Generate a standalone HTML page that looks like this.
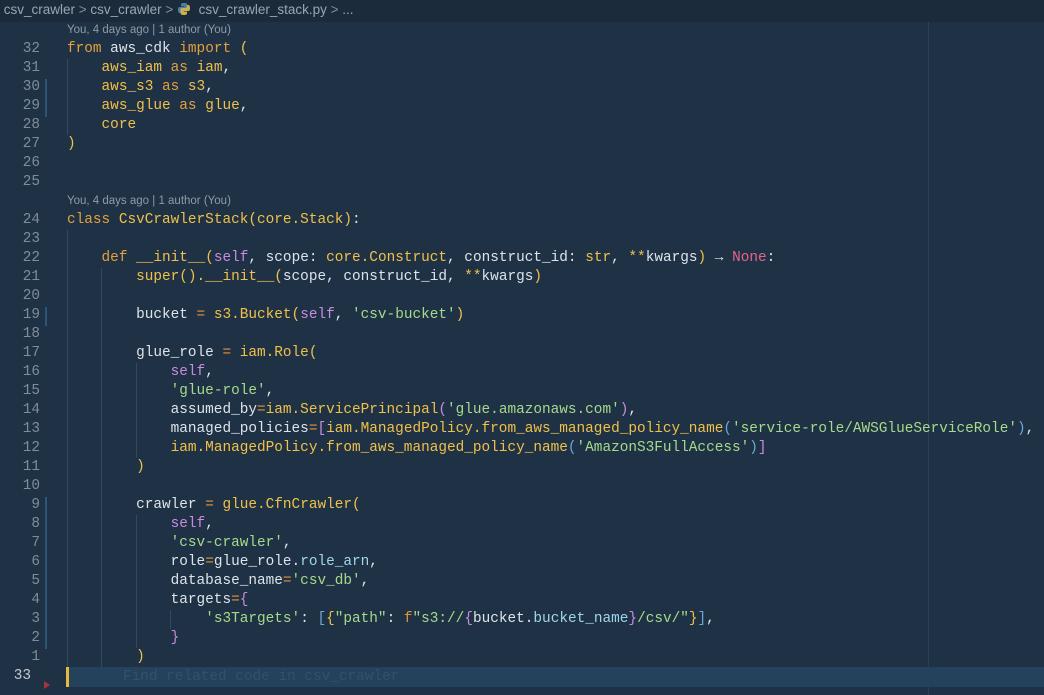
<!DOCTYPE html>
<html><head><meta charset="utf-8"><style>
body{margin:0;width:1044px;height:695px;overflow:hidden;background:#1f3245;position:relative;font-family:"Liberation Mono",monospace;}
#bc{position:absolute;left:0;top:0;width:1044px;height:22px;background:#1b2b3b;color:#9aa6b2;font:13.5px "Liberation Sans",sans-serif;line-height:20px;white-space:pre;}
.row{position:absolute;left:0;width:1044px;height:19px;line-height:19px;font-size:14.4px;white-space:pre;}
.ln{position:absolute;left:0;width:40px;text-align:right;color:#7f8c99;}
.code{position:absolute;left:67px;color:#dde3ea;}
.lens{position:absolute;left:67px;font:11.5px "Liberation Sans",sans-serif;color:#8e9aa7;height:18px;line-height:18px;white-space:pre;}
.k{color:#e3a03c}.y{color:#efc04a}.s{color:#a6d98c}.p{color:#c98ae0}.n{color:#e2648a}.b{color:#6aa7d8}.c{color:#9fd6e8}.o{color:#e49238}
.g{position:absolute;width:1px;background:#34495d}
.bar{position:absolute;left:45px;width:2px;background:#2c5676}
</style></head><body>
<div id="bc"> csv_crawler <span style="color:#8090a0">&gt;</span> csv_crawler <span style="color:#8090a0">&gt;</span> <svg width="14" height="14" viewBox="0 0 14 14" style="vertical-align:-2px"><path d="M7 1C4 1 4 2 4 3v1.5h3.2V5H2.5C1 5 1 7 1 8s.3 3 1.5 3H4V9.5C4 8.5 5 8 6 8h3c1 0 1.5-.5 1.5-1.5V3C10.5 2 10 1 7 1z" fill="#4a7fa8"/><path d="M7 13c3 0 3-1 3-2V9.5H6.8V9h4.7c1.5 0 1.5-2 1.5-3s-.3-3-1.5-3H10v1.5C10 5.5 9 6 8 6H5C4 6 3.5 6.5 3.5 7.5V11C3.5 12 4 13 7 13z" fill="#c9b14e"/></svg>  csv_crawler_stack.py <span style="color:#8090a0">&gt;</span> ...</div>

<div class="g" style="left:67px;top:59px;height:76px"></div>
<div class="g" style="left:67px;top:230px;height:437px"></div>
<div class="g" style="left:101px;top:268px;height:399px"></div>
<div class="g" style="left:136px;top:363px;height:95px"></div>
<div class="g" style="left:136px;top:515px;height:133px"></div>
<div class="g" style="left:170px;top:610px;height:19px"></div>
<div class="g" style="left:928px;top:22px;height:673px;background:#2a4257"></div>

<div class="bar" style="top:79px;height:38px"></div>
<div class="bar" style="top:307px;height:19px"></div>
<div class="bar" style="top:497px;height:152px"></div>

<div class="lens" style="top:21px">You, 4 days ago | 1 author (You)</div>
<div class="row" style="top:40px"><span class="ln">32</span><span class="code"><span class="k">from</span> aws_cdk <span class="k">import</span> <span class="y">(</span></span></div>
<div class="row" style="top:59px"><span class="ln">31</span><span class="code"><span class="y">    aws_iam</span> <span class="k">as</span> <span class="y">iam</span>,</span></div>
<div class="row" style="top:78px"><span class="ln">30</span><span class="code"><span class="y">    aws_s3</span> <span class="k">as</span> <span class="y">s3</span>,</span></div>
<div class="row" style="top:97px"><span class="ln">29</span><span class="code"><span class="y">    aws_glue</span> <span class="k">as</span> <span class="y">glue</span>,</span></div>
<div class="row" style="top:116px"><span class="ln">28</span><span class="code"><span class="y">    core</span></span></div>
<div class="row" style="top:135px"><span class="ln">27</span><span class="code"><span class="y">)</span></span></div>
<div class="row" style="top:154px"><span class="ln">26</span></div>
<div class="row" style="top:173px"><span class="ln">25</span></div>
<div class="lens" style="top:192px">You, 4 days ago | 1 author (You)</div>
<div class="row" style="top:211px"><span class="ln">24</span><span class="code"><span class="k">class</span> <span class="y">CsvCrawlerStack(core.Stack)</span>:</span></div>
<div class="row" style="top:230px"><span class="ln">23</span></div>
<div class="row" style="top:249px"><span class="ln">22</span><span class="code">    <span class="k">def</span> <span class="y">__init__(</span><span class="p">self</span>, scope: <span class="y">core.Construct</span>, construct_id: <span class="y">str</span>, <span class="y">**</span>kwargs<span class="y">)</span> → <span class="n">None</span>:</span></div>
<div class="row" style="top:268px"><span class="ln">21</span><span class="code">        <span class="y">super().__init__(</span>scope, construct_id, <span class="y">**</span>kwargs<span class="y">)</span></span></div>
<div class="row" style="top:287px"><span class="ln">20</span></div>
<div class="row" style="top:306px"><span class="ln">19</span><span class="code">        bucket <span class="o">=</span> <span class="y">s3.Bucket(</span><span class="p">self</span>, <span class="s">'csv-bucket'</span><span class="y">)</span></span></div>
<div class="row" style="top:325px"><span class="ln">18</span></div>
<div class="row" style="top:344px"><span class="ln">17</span><span class="code">        glue_role <span class="o">=</span> <span class="y">iam.Role(</span></span></div>
<div class="row" style="top:363px"><span class="ln">16</span><span class="code">            <span class="p">self</span>,</span></div>
<div class="row" style="top:382px"><span class="ln">15</span><span class="code">            <span class="s">'glue-role'</span>,</span></div>
<div class="row" style="top:401px"><span class="ln">14</span><span class="code">            assumed_by<span class="o">=</span><span class="y">iam.ServicePrincipal</span><span class="p">(</span><span class="s">'glue.amazonaws.com'</span><span class="p">)</span>,</span></div>
<div class="row" style="top:420px"><span class="ln">13</span><span class="code">            managed_policies<span class="o">=</span><span class="p">[</span><span class="y">iam.ManagedPolicy.from_aws_managed_policy_name</span><span class="b">(</span><span class="s">'service-role/AWSGlueServiceRole'</span><span class="b">)</span>,</span></div>
<div class="row" style="top:439px"><span class="ln">12</span><span class="code">            <span class="y">iam.ManagedPolicy.from_aws_managed_policy_name</span><span class="b">(</span><span class="s">'AmazonS3FullAccess'</span><span class="b">)</span><span class="p">]</span></span></div>
<div class="row" style="top:458px"><span class="ln">11</span><span class="code">        <span class="y">)</span></span></div>
<div class="row" style="top:477px"><span class="ln">10</span></div>
<div class="row" style="top:496px"><span class="ln">9</span><span class="code">        crawler <span class="o">=</span> <span class="y">glue.CfnCrawler(</span></span></div>
<div class="row" style="top:515px"><span class="ln">8</span><span class="code">            <span class="p">self</span>,</span></div>
<div class="row" style="top:534px"><span class="ln">7</span><span class="code">            <span class="s">'csv-crawler'</span>,</span></div>
<div class="row" style="top:553px"><span class="ln">6</span><span class="code">            role<span class="o">=</span>glue_role.<span class="c">role_arn</span>,</span></div>
<div class="row" style="top:572px"><span class="ln">5</span><span class="code">            database_name<span class="o">=</span><span class="s">'csv_db'</span>,</span></div>
<div class="row" style="top:591px"><span class="ln">4</span><span class="code">            targets<span class="o">=</span><span class="p">{</span></span></div>
<div class="row" style="top:610px"><span class="ln">3</span><span class="code">                <span class="s">'s3Targets'</span>: <span class="b">[</span><span class="y">{</span><span class="s">"path"</span>: <span class="o">f</span><span class="s">"s3://</span><span class="p">{</span>bucket.<span class="c">bucket_name</span><span class="p">}</span><span class="s">/csv/"</span><span class="y">}</span><span class="b">]</span>,</span></div>
<div class="row" style="top:629px"><span class="ln">2</span><span class="code">            <span class="p">}</span></span></div>
<div class="row" style="top:648px"><span class="ln">1</span><span class="code">        <span class="y">)</span></span></div>
<div class="row" style="top:667px;height:20px;"><span style="position:absolute;left:67px;top:0;width:977px;height:20px;background:#24425c"></span><span style="position:absolute;left:66px;top:0;width:3px;height:20px;background:#e8b93a"></span><span class="ln" style="color:#c2cad2;width:31px">33</span><span class="code" style="left:123px;color:#34506a;line-height:20px">Find related code in csv_crawler</span></div>
<svg style="position:absolute;left:44px;top:681px" width="6" height="8"><path d="M0 0L6 4L0 8z" fill="#a8323a"/></svg>
</body></html>
